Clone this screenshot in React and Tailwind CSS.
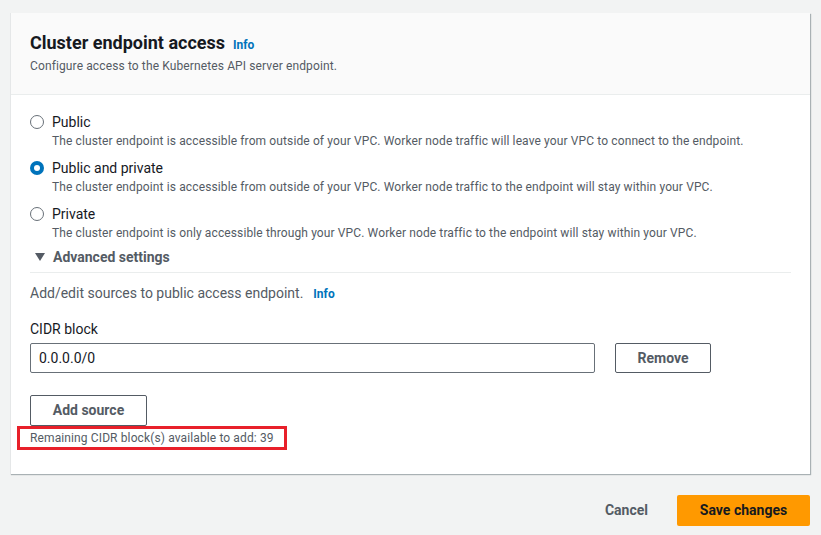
import { useState } from 'react'

const options = [
  {
    id: 'public',
    label: 'Public',
    desc: 'The cluster endpoint is accessible from outside of your VPC. Worker node traffic will leave your VPC to connect to the endpoint.',
  },
  {
    id: 'both',
    label: 'Public and private',
    desc: 'The cluster endpoint is accessible from outside of your VPC. Worker node traffic to the endpoint will stay within your VPC.',
  },
  {
    id: 'private',
    label: 'Private',
    desc: 'The cluster endpoint is only accessible through your VPC. Worker node traffic to the endpoint will stay within your VPC.',
  },
]

const Radio = ({ checked }) => (
  checked ? (
    <span className="w-[14px] h-[14px] rounded-full bg-[#0073bb] flex items-center justify-center shrink-0">
      <span className="w-[6px] h-[6px] rounded-full bg-white" />
    </span>
  ) : (
    <span className="w-[14px] h-[14px] rounded-full border border-[#687078] bg-white shrink-0" />
  )
)

const App = () => {
  const [access, setAccess] = useState('both')

  return (
    <div className="w-[821px] h-[535px] bg-[#f2f3f3] pt-[13px] px-[10px] text-[#16191f]" style={{ fontFamily: 'Roboto, "Open Sans", sans-serif' }}>
      <div className="w-[800px] bg-white border-l border-[#e5e7e8] shadow-[1px_1px_1px_0_rgba(0,28,36,0.3)]">
        {/* header */}
        <div className="bg-[#fafafa] border-b border-[#eaeded] h-[82px] pt-[19px] px-[19px]">
          <div className="flex items-baseline gap-[8px]">
            <h2 className="text-[18px] leading-[22px] font-bold">Cluster endpoint access</h2>
            <span className="text-[12px] font-bold text-[#0073bb]">Info</span>
          </div>
          <p className="mt-[4px] text-[12px] leading-[16px] tracking-[0.12px] text-[#545b64]">Configure access to the Kubernetes API server endpoint.</p>
        </div>

        {/* body */}
        <div className="px-[19px] pt-[17px] pb-[26px]">
          <div className="flex flex-col gap-[8px]">
            {options.map(o => (
              <div key={o.id} className="cursor-pointer" onClick={() => setAccess(o.id)}>
                <div className="flex items-center gap-[8px] h-[20px]">
                  <Radio checked={access === o.id} />
                  <span className="text-[14px] leading-[20px]">{o.label}</span>
                </div>
                <p className="pl-[22px] text-[12px] leading-[18px] tracking-[0.12px] text-[#545b64]">{o.desc}</p>
              </div>
            ))}
          </div>

          <div className="mt-[5px] pb-[5px] border-b border-[#eaeded] flex items-center gap-[8px] h-[26px]">
            <svg width="10" height="8" viewBox="0 0 10 8" className="ml-[5px]">
              <path d="M0 0 H10 L5 8 Z" fill="#545b64" />
            </svg>
            <span className="text-[14px] leading-[20px] font-bold text-[#545b64]">Advanced settings</span>
          </div>

          <div className="mt-[10px] flex items-baseline gap-[10px]">
            <span className="text-[14px] leading-[20px] text-[#545b64]">Add/edit sources to public access endpoint.</span>
            <span className="text-[12px] font-bold text-[#0073bb]">Info</span>
          </div>

          <div className="mt-[16px] text-[14px] leading-[20px]">CIDR block</div>
          <div className="mt-[4px] flex gap-[20px]">
            <input
              defaultValue="0.0.0.0/0"
              className="w-[565px] h-[30px] border border-[#687078] rounded-[2px] px-[8px] text-[14px] text-[#16191f] outline-none"
            />
            <button className="w-[96px] h-[30px] border border-[#545b64] rounded-[2px] text-[14px] font-bold text-[#545b64]">Remove</button>
          </div>

          <button className="mt-[22px] w-[117px] h-[31px] border border-[#545b64] rounded-[2px] text-[14px] font-bold text-[#545b64]">Add source</button>

          <div className="relative">
            <p className="text-[12px] leading-[20px] tracking-[0.12px] text-[#545b64] pt-[2px]">Remaining CIDR block(s) available to add: 39</p>
            <div className="absolute left-[-13px] top-[0px] w-[270px] h-[24px] border-[3px] border-[#e8202a]" />
          </div>
        </div>
      </div>

      {/* footer */}
      <div className="w-[800px] mt-[21px] flex items-center justify-end gap-[29px]">
        <button className="text-[14px] font-bold text-[#545b64]">Cancel</button>
        <button className="w-[133px] h-[31px] bg-[#ff9900] rounded-[2px] text-[14px] font-bold text-[#16191f]">Save changes</button>
      </div>
    </div>
  )
}

export default App
